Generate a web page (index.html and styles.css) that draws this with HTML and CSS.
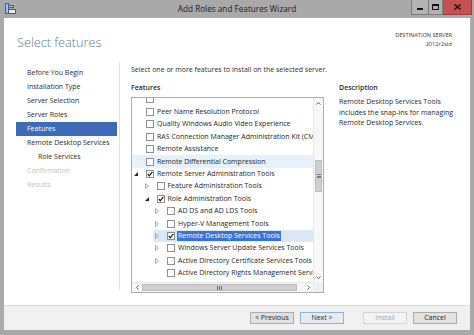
FILE: index.html
```html
<!DOCTYPE html>
<html lang="en">
<head>
    <meta charset="UTF-8">
    <title>Add Roles and Features Wizard</title>
    <link rel="stylesheet" href="styles.css">
</head>
<body>

<div class="window">
    <!-- Title bar -->
    <div class="titlebar">
        <div class="app-icon">
            <svg width="11" height="11" viewBox="0 0 11 11">
                <rect x="0.5" y="0.5" width="3" height="10" fill="#9cc3ea" stroke="#2f64b0"/>
                <rect x="3.5" y="2.5" width="5" height="2" fill="#9cc3ea" stroke="#2f64b0"/>
                <rect x="3.5" y="6.5" width="7" height="4" fill="#e8e8e8" stroke="#5a5a5a"/>
            </svg>
        </div>
        <div class="title">Add Roles and Features Wizard</div>
        <div class="controls">
            <span class="ctl ctl-min"><svg width="6" height="6" viewBox="0 0 6 6"><rect x="0" y="4" width="6" height="2" fill="#111"/></svg></span>
            <span class="ctl ctl-max"><svg width="7" height="6" viewBox="0 0 7 6"><rect x="0.5" y="0.5" width="6" height="5" fill="none" stroke="#111"/><rect x="0" y="0" width="7" height="2" fill="#111"/></svg></span>
            <span class="ctl ctl-close"><svg width="7" height="6" viewBox="0 0 7 6"><path d="M0.5 0.5 L6.5 5.5 M6.5 0.5 L0.5 5.5" stroke="#2a1010" stroke-width="1.6"/></svg></span>
        </div>
    </div>

    <div class="client">
        <div class="header">
            <h1>Select features</h1>
            <div class="dest">
                <div>DESTINATION SERVER</div>
                <div>2012r2std</div>
            </div>
        </div>

        <div class="body">
            <ul class="nav">
                <li>Before You Begin</li>
                <li>Installation Type</li>
                <li>Server Selection</li>
                <li>Server Roles</li>
                <li class="active">Features</li>
                <li>Remote Desktop Services</li>
                <li class="sub">Role Services</li>
                <li class="disabled">Confirmation</li>
                <li class="disabled">Results</li>
            </ul>

            <div class="main">
                <p class="intro">Select one or more features to install on the selected server.</p>
                <div class="columns">
                    <div class="features">
                        <h2>Features</h2>
                        <div class="listbox">
                            <div class="viewport">
                                <div class="tree">
                                    <!-- row scrolled mostly out of view -->
                                    <div class="row"><span class="item"><span class="twisty"></span><span class="check"></span></span></div>
                                    <div class="row"><span class="item"><span class="twisty"></span><span class="check"></span><span class="label">Peer Name Resolution Protocol</span></span></div>
                                    <div class="row"><span class="item"><span class="twisty"></span><span class="check"></span><span class="label">Quality Windows Audio Video Experience</span></span></div>
                                    <div class="row"><span class="item"><span class="twisty"></span><span class="check"></span><span class="label">RAS Connection Manager Administration Kit (CMAK)</span></span></div>
                                    <div class="row"><span class="item"><span class="twisty"></span><span class="check"></span><span class="label">Remote Assistance</span></span></div>
                                    <div class="row"><span class="item hover"><span class="twisty"></span><span class="check"></span><span class="label">Remote Differential Compression</span></span></div>
                                    <div class="row"><span class="item"><span class="twisty"><svg class="open" width="4" height="4" viewBox="0 0 4 4"><polygon points="4,0 4,4 0,4" fill="#262626"/></svg></span><span class="check checked"><svg width="6" height="6" viewBox="0 0 6 6"><polyline points="0.8,3 2.3,4.8 5.4,0.8" fill="none" stroke="#1d1d1d" stroke-width="1.2"/></svg></span><span class="label">Remote Server Administration Tools</span></span></div>
                                    <div class="row lvl1"><span class="item"><span class="twisty"><svg width="4" height="6" viewBox="0 0 4 6"><polygon points="0.5,0.5 3.5,3 0.5,5.5" fill="none" stroke="#a8a8a8"/></svg></span><span class="check"></span><span class="label">Feature Administration Tools</span></span></div>
                                    <div class="row lvl1"><span class="item"><span class="twisty"><svg class="open" width="4" height="4" viewBox="0 0 4 4"><polygon points="4,0 4,4 0,4" fill="#262626"/></svg></span><span class="check checked"><svg width="6" height="6" viewBox="0 0 6 6"><polyline points="0.8,3 2.3,4.8 5.4,0.8" fill="none" stroke="#1d1d1d" stroke-width="1.2"/></svg></span><span class="label">Role Administration Tools</span></span></div>
                                    <div class="row lvl2"><span class="item"><span class="twisty"><svg width="4" height="6" viewBox="0 0 4 6"><polygon points="0.5,0.5 3.5,3 0.5,5.5" fill="none" stroke="#a8a8a8"/></svg></span><span class="check"></span><span class="label">AD DS and AD LDS Tools</span></span></div>
                                    <div class="row lvl2"><span class="item"><span class="twisty"><svg width="4" height="6" viewBox="0 0 4 6"><polygon points="0.5,0.5 3.5,3 0.5,5.5" fill="none" stroke="#a8a8a8"/></svg></span><span class="check"></span><span class="label">Hyper-V Management Tools</span></span></div>
                                    <div class="row lvl2"><span class="item selected"><span class="twisty"><svg width="4" height="6" viewBox="0 0 4 6"><polygon points="0.5,0.5 3.5,3 0.5,5.5" fill="none" stroke="#a8a8a8"/></svg></span><span class="check checked"><svg width="6" height="6" viewBox="0 0 6 6"><polyline points="0.8,3 2.3,4.8 5.4,0.8" fill="none" stroke="#1d1d1d" stroke-width="1.2"/></svg></span><span class="label">Remote Desktop Services Tools</span></span></div>
                                    <div class="row lvl2"><span class="item"><span class="twisty"><svg width="4" height="6" viewBox="0 0 4 6"><polygon points="0.5,0.5 3.5,3 0.5,5.5" fill="none" stroke="#a8a8a8"/></svg></span><span class="check"></span><span class="label">Windows Server Update Services Tools</span></span></div>
                                    <div class="row lvl2"><span class="item"><span class="twisty"><svg width="4" height="6" viewBox="0 0 4 6"><polygon points="0.5,0.5 3.5,3 0.5,5.5" fill="none" stroke="#a8a8a8"/></svg></span><span class="check"></span><span class="label">Active Directory Certificate Services Tools</span></span></div>
                                    <div class="row lvl2"><span class="item"><span class="twisty"></span><span class="check"></span><span class="label">Active Directory Rights Management Services Tools</span></span></div>
                                </div>
                            </div>

                            <!-- Scroll bars -->
                            <div class="vscroll">
                                <span class="sb-btn"><svg width="5" height="3" viewBox="0 0 5 3"><polyline points="0.5,2.5 2.5,0.5 4.5,2.5" fill="none" stroke="#606060"/></svg></span>
                                <div class="sb-track"><div class="thumb thumb-v"><span class="grip-v"></span></div></div>
                                <span class="sb-btn"><svg width="5" height="3" viewBox="0 0 5 3"><polyline points="0.5,0.5 2.5,2.5 4.5,0.5" fill="none" stroke="#606060"/></svg></span>
                            </div>
                            <div class="hscroll">
                                <span class="sb-btn"><svg width="3" height="5" viewBox="0 0 3 5"><polyline points="2.5,0.5 0.5,2.5 2.5,4.5" fill="none" stroke="#606060"/></svg></span>
                                <div class="sb-track"><div class="thumb thumb-h"><span class="grip-h"></span></div></div>
                                <span class="sb-btn"><svg width="3" height="5" viewBox="0 0 3 5"><polyline points="0.5,0.5 2.5,2.5 0.5,4.5" fill="none" stroke="#606060"/></svg></span>
                            </div>
                            <div class="corner"></div>
                        </div>
                    </div>

                    <div class="desc">
                        <h2>Description</h2>
                        <p>Remote Desktop Services Tools<br>includes the snap-ins for managing<br>Remote Desktop Services.</p>
                    </div>
                </div>
            </div>
        </div>

        <div class="footer">
            <button class="btn">&lt; Previous</button>
            <button class="btn btn-default">Next &gt;</button>
            <button class="btn btn-gap" disabled>Install</button>
            <button class="btn">Cancel</button>
        </div>
    </div>
</div>

</body>
</html>
```

FILE: styles.css
```css
* {
    margin: 0;
    padding: 0;
    box-sizing: border-box;
}

body, html {
    width: 474px;
    height: 335px;
    overflow: hidden;
    background: #a9a9a9;
    font-family: "Open Sans", "Noto Sans", sans-serif;
    font-size: 7px;
    color: #1e1e1e;
}

.window {
    display: flex;
    flex-direction: column;
    width: 474px;
    height: 335px;
    background: #a9a9a9;
}

/* Title bar */
.titlebar {
    display: grid;
    grid-template-columns: 1fr auto 1fr;
    height: 18px;
    flex-shrink: 0;
}

.app-icon {
    padding: 3px 0 0 5px;
}

.title {
    font-size: 8.2px;
    line-height: 18px;
    color: #1a1a1a;
}

.controls {
    display: flex;
    justify-content: flex-end;
    align-items: flex-start;
    padding-right: 2px;
}

.ctl {
    display: flex;
    justify-content: center;
    align-items: center;
    height: 15px;
    border: 1px solid #7c7c7c;
    border-top: none;
    background: #b3b3b3;
}

.ctl-min {
    width: 17px;
    border-right: none;
}

.ctl-max {
    width: 15px;
}

.ctl-close {
    width: 29px;
    background: #c75050;
    border-color: #9b3b3b;
    border-left: none;
}

/* Client area */
.client {
    display: flex;
    flex-direction: column;
    flex: 1;
    margin: 0 4px 5px 4px;
    background: #fff;
}

.header {
    display: flex;
    justify-content: space-between;
    align-items: flex-start;
    height: 39px;
    padding: 13px 18px 0 13px;
}

.header h1 {
    margin-top: 3px;
    font-size: 12.7px;
    line-height: 16px;
    font-weight: 300;
    color: #5d7b8c;
}

.dest {
    text-align: right;
    font-size: 5.6px;
    line-height: 8.5px;
    color: #333;
}

.body {
    display: flex;
    flex: 1;
}

/* Left navigation */
.nav {
    list-style: none;
    width: 116px;
    margin: 5px 0 15px 0;
    padding-top: 4px;
    border-right: 1px solid #e2e2e2;
}

.nav li {
    height: 14px;
    line-height: 14px;
    margin: 0 2px 0 12px;
    padding-left: 11px;
    color: #2b2b2b;
    white-space: nowrap;
}

.nav li.active {
    background: #3d6bb8;
    color: #fff;
}

.nav li.sub {
    padding-left: 22px;
}

.nav li.disabled {
    color: #c2c2c2;
}

/* Main panel */
.main {
    flex: 1;
    padding: 8px 0 0 11px;
}

.intro {
    line-height: 10px;
    color: #2b2b2b;
}

.columns {
    display: flex;
    gap: 15px;
    margin-top: 8px;
}

.columns h2 {
    font-size: 7px;
    line-height: 10px;
    font-weight: 600;
    color: #2b2b2b;
    margin-bottom: 4px;
}

.features {
    width: 193px;
}

.desc {
    width: 120px;
}

.desc p {
    line-height: 10.5px;
    color: #2b2b2b;
}

/* Tree list box */
.listbox {
    display: grid;
    grid-template-columns: 1fr 10px;
    grid-template-rows: 1fr 10px;
    height: 196px;
    border: 1px solid #abadb3;
}

.viewport {
    overflow: hidden;
}

.tree {
    margin-top: -6px;
}

.tree .row:first-child .item {
    height: 13.8px;
}

.row.lvl1 {
    padding-left: 10.5px;
}

.row.lvl2 {
    padding-left: 21px;
}

.item {
    display: flex;
    align-items: center;
    height: 12.4px;
    white-space: nowrap;
}

.item.hover {
    background: #e5f1fb;
}

.item.selected {
    background: #d9e7f7;
}

.item.selected .label {
    background: #3a72d6;
    color: #fff;
    padding: 0 1px;
    margin-left: -1px;
}

.twisty {
    display: flex;
    align-items: center;
    width: 13px;
    height: 100%;
    padding-left: 2px;
    flex-shrink: 0;
}

.twisty .open {
    margin-top: 1px;
}

.check {
    display: flex;
    justify-content: center;
    align-items: center;
    width: 8px;
    height: 8px;
    margin: 0 3px 0 1px;
    border: 1px solid #8e8f8f;
    background: #fff;
    flex-shrink: 0;
}

.label {
    line-height: 10px;
}

/* Scroll bars */
.vscroll {
    display: flex;
    flex-direction: column;
    background: #f7f7f7;
    border-left: 1px solid #e6e6e6;
}

.hscroll {
    display: flex;
    background: #f7f7f7;
    border-top: 1px solid #e6e6e6;
}

.sb-btn {
    display: flex;
    justify-content: center;
    align-items: center;
    width: 10px;
    height: 10px;
    flex-shrink: 0;
}

.vscroll .sb-btn {
    width: 100%;
}

.hscroll .sb-btn {
    height: 100%;
}

.sb-track {
    flex: 1;
    display: flex;
}

.vscroll .sb-track {
    flex-direction: column;
}

.thumb {
    display: flex;
    justify-content: center;
    align-items: center;
    background: #cfcfcf;
    border: 1px solid #bdbdbd;
}

.thumb-v {
    height: 32px;
    margin: 52px 1px 0 1px;
}

.thumb-h {
    width: 155px;
    margin: 1px 0;
}

.grip-v {
    width: 4px;
    height: 4px;
    border-top: 1px solid #7d7d7d;
    border-bottom: 1px solid #7d7d7d;
    background: linear-gradient(#cfcfcf 1px, #7d7d7d 1px, #7d7d7d 2px, #cfcfcf 2px);
}

.grip-h {
    width: 5px;
    height: 4px;
    border-left: 1px solid #6d6d6d;
    border-right: 1px solid #6d6d6d;
    background: linear-gradient(90deg, #cfcfcf 1px, #6d6d6d 1px, #6d6d6d 2px, #cfcfcf 2px);
}

.corner {
    background: #f0f0f0;
}

/* Footer buttons */
.footer {
    display: flex;
    justify-content: flex-end;
    align-items: center;
    gap: 6px;
    height: 25px;
    padding: 0 13px 1px 0;
    border-top: 1px solid #dcdcdc;
    background: #f0f0f0;
    flex-shrink: 0;
}

.btn {
    width: 44px;
    height: 12px;
    font-family: "Open Sans", "Noto Sans", sans-serif;
    font-size: 7px;
    line-height: 10px;
    color: #1e1e1e;
    background: #e1e1e1;
    border: 1px solid #acacac;
}

.btn-default {
    background: #e5ebf2;
    border-color: #8eb2d9;
}

.btn-gap {
    margin-left: 13px;
}

.btn:disabled {
    background: #f4f4f4;
    border-color: #d3d3d3;
    color: #a5a5a5;
}
```
